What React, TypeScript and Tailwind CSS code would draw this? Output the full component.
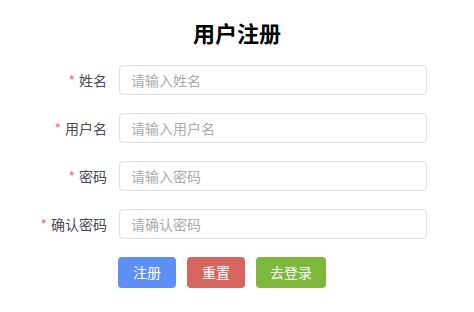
import React from "react";

const fields = [
  { label: "姓名", placeholder: "请输入姓名", type: "text" },
  { label: "用户名", placeholder: "请输入用户名", type: "text" },
  { label: "密码", placeholder: "请输入密码", type: "password" },
  { label: "确认密码", placeholder: "请确认密码", type: "password" },
];

export default function App() {
  return (
    <div
      className="w-[474px] h-[312px] bg-white"
      style={{ fontFamily: '"Noto Sans CJK SC", "Noto Sans", sans-serif' }}
    >
      <h1 className="pt-[17px] text-center text-[22px] leading-[30px] font-bold text-black">用户注册</h1>
      <form className="mt-[18px] pl-[27px]" onSubmit={(e) => e.preventDefault()}>
        {fields.map((f) => (
          <div key={f.label} className="flex items-center h-[30px] mb-[18px]">
            <label className="w-[80px] text-right text-[14px] text-[#4a4c50] mr-[12px] whitespace-nowrap">
              <span className="text-[#f56c6c] mr-[4px]">*</span>
              {f.label}
            </label>
            <input
              type={f.type}
              placeholder={f.placeholder}
              className="w-[308px] h-[30px] px-[11px] text-[14px] text-[#606266] border border-[#dcdfe6] rounded-[4px] outline-none placeholder:text-[#a8abb2]"
            />
          </div>
        ))}
        <div className="flex gap-[11px] ml-[91px] mt-[18px]">
          <button className="h-[31px] px-[15px] text-[14px] text-white bg-[#5e8ff5] rounded-[4px]">注册</button>
          <button className="h-[31px] px-[15px] text-[14px] text-white bg-[#d5665f] rounded-[4px]">重置</button>
          <button className="h-[31px] px-[14px] text-[14px] text-white bg-[#7db83c] rounded-[4px]">去登录</button>
        </div>
      </form>
    </div>
  );
}
